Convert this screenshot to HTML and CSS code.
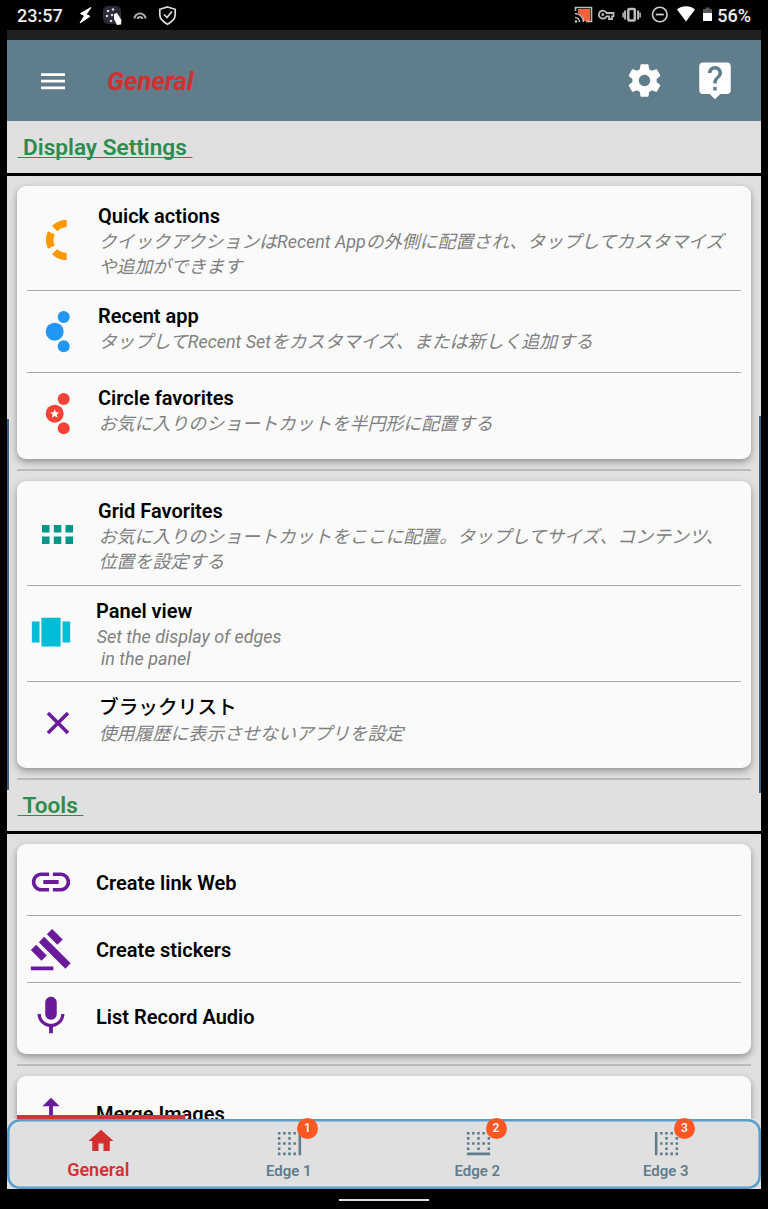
FILE: index.html
```html
<!DOCTYPE html>
<html lang="ja">
<head>
    <meta charset="UTF-8">
    <meta name="viewport" content="width=device-width, initial-scale=1.0">
    <title>General</title>
    <link rel="stylesheet" href="styles.css">
</head>
<body>
    <div class="status-bar">
        <span class="clock">23:57</span>
        <svg class="status-left" width="102" height="24" viewBox="0 0 102 24">
            <path d="M14 4.500L3.500 10.500l4 2.200L3 20 13 13.300l-4-1.800z" fill="#fff" stroke="#fff"/>
            <rect x="26" y="3" width="18" height="18" rx="5" fill="#2b2b38"/>
            <g fill="#d5d5df">
                <circle cx="31" cy="8" r="1.300"/><circle cx="36" cy="6.500" r="1.300"/><circle cx="30" cy="13" r="1.300"/>
                <circle cx="34" cy="18" r="1.300"/><circle cx="35" cy="12" r="1.300"/>
            </g>
            <path d="M37 11l3-1 4.500 7-.5 4.500-4 .5-3-6z" fill="#fff"/>
            <path d="M57.500 15.500a5.500 5 0 0 1 11 0M60.800 16a2.200 2 0 0 1 4.400 0" fill="none" stroke="#aaa" stroke-width="2.200"/>
            <path d="M90.500 4l7.700 2.300v5.500c0 4.500-3.200 7-7.700 9.500-4.500-2.500-7.700-5-7.700-9.500V6.300z" fill="none" stroke="#ddd" stroke-width="1.700"/>
            <path d="M87 11.500l3 3 5-6" fill="none" stroke="#ddd" stroke-width="1.700"/>
        </svg>
        <svg class="status-right" width="140" height="24" viewBox="0 0 140 24">
            <path d="M4 6h12v12h-6a12 12 0 0 0-6-8z" fill="#f0643c"/>
            <path d="M1.500 8V4.500h16v14H12M1 10.500a8.500 8.500 0 0 1 8.500 8.500M1 14.500A4.500 4.500 0 0 1 5.500 19" fill="none" stroke="#bbb" stroke-width="1.600"/>
            <circle cx="2" cy="18.500" r="1.200" fill="#ccc"/>
            <path d="M32.500 10h7v3.300H38V16h-3v-2.700h-2.500a4 4 0 1 1 0-3.300z" fill="none" stroke="#bbb" stroke-width="1.800"/>
            <circle cx="28.800" cy="11.700" r="1.400" fill="#bbb"/>
            <rect x="54.300" y="6" width="6.500" height="11.500" rx="1" fill="none" stroke="#bbb" stroke-width="2.500"/>
            <path d="M51.100 7.500v9M64.100 7.500v9" stroke="#bbb" stroke-width="2"/>
            <path d="M49.100 9.500v5M66.100 9.500v5" stroke="#bbb" stroke-width="1.500"/>
            <circle cx="85.800" cy="11.500" r="7.300" fill="none" stroke="#ccc" stroke-width="1.600"/>
            <path d="M81.800 11.500h8" stroke="#ccc" stroke-width="1.800"/>
            <path d="M103 6.500a14 14 0 0 1 18 0l-9 12z" fill="#fff"/>
            <path d="M129 6h2.500V4.500h4V6h2.500v5.500h-9z" fill="#555"/>
            <path d="M129 10h9v8h-9z" fill="#fff"/>
        </svg>
        <span class="battery">56%</span>
    </div>

    <div class="screen">
        <div class="toolbar">
            <svg class="menu-icon" width="24" height="17" viewBox="0 0 24 17">
                <path d="M0 1.600h24M0 8.200h24M0 14.800h24" stroke="#fff" stroke-width="2.700"/>
            </svg>
            <h1>General</h1>
            <svg class="gear-icon" width="39" height="39" viewBox="0 0 24 24">
                <path fill="#fff" d="M19.430 12.980c.04-.32.07-.64.07-.98s-.03-.66-.07-.98l2.110-1.650c.19-.15.24-.42.12-.64l-2-3.460c-.12-.22-.39-.3-.61-.22l-2.490 1c-.52-.4-1.080-.73-1.690-.98l-.38-2.650C14.460 2.180 14.250 2 14 2h-4c-.25 0-.46.18-.49.42l-.38 2.650c-.61.25-1.170.59-1.690.98l-2.490-1c-.23-.09-.49 0-.61.22l-2 3.460c-.13.22-.07.49.12.64l2.110 1.650c-.04.32-.07.65-.07.98s.03.66.07.98l-2.110 1.650c-.19.15-.24.42-.12.64l2 3.460c.12.22.39.3.61.22l2.490-1c.52.4 1.080.73 1.690.98l.38 2.650c.03.24.24.42.49.42h4c.25 0 .46-.18.49-.42l.38-2.650c.61-.25 1.170-.59 1.690-.98l2.490 1c.23.09.49 0 .61-.22l2-3.460c.12-.22.07-.49-.12-.64l-2.110-1.650zM12 15.500c-1.930 0-3.500-1.570-3.500-3.500s1.570-3.500 3.500-3.500 3.500 1.570 3.500 3.500-1.570 3.500-3.500 3.500z"/>
            </svg>
            <svg class="help-icon" width="42" height="42" viewBox="0 0 24 24">
                <path fill="#fff" d="M19 2H5c-1.110 0-2 .9-2 2v14c0 1.100.89 2 2 2h4l3 3 3-3h4c1.100 0 2-.9 2-2V4c0-1.100-.9-2-2-2zm-6 16h-2v-2h2v2zm2.070-7.750l-.9.920C13.450 11.900 13 12.500 13 14h-2v-.5c0-1.100.45-2.100 1.170-2.830l1.240-1.260c.37-.36.59-.86.59-1.410 0-1.100-.9-2-2-2s-2 .9-2 2H8c0-2.210 1.790-4 4-4s4 1.790 4 4c0 .88-.36 1.680-.93 2.250z"/>
            </svg>
        </div>

        <div class="content">
            <h2 class="section-title"> Display Settings </h2>

            <div class="card">
                <div class="row row-quick">
                    <svg class="icon" width="40" height="40" viewBox="0 0 40 40">
                        <path d="M29.700 3.600A16.600 16.600 0 0 0 17.700 8.600M14.400 12.800a16.600 16.600 0 0 0 0 14.400M17.700 31.600a16.600 16.600 0 0 0 12 4.900" fill="none" stroke="#ff9800" stroke-width="7.500"/>
                    </svg>
                    <div class="text">
                        <h3>Quick actions</h3>
                        <p>クイックアクションはRecent Appの外側に配置され、タップしてカスタマイズ<br>や追加ができます</p>
                    </div>
                </div>
                <div class="row row-recent">
                    <svg class="icon" width="40" height="42" viewBox="0 0 40 42">
                        <g fill="#2196f3">
                            <circle cx="26.700" cy="6" r="6"/><circle cx="17.700" cy="20.700" r="9"/><circle cx="26.700" cy="35.300" r="6"/>
                        </g>
                    </svg>
                    <div class="text">
                        <h3>Recent app</h3>
                        <p>タップしてRecent Setをカスタマイズ、または新しく追加する</p>
                    </div>
                </div>
                <div class="row row-circle">
                    <svg class="icon" width="40" height="42" viewBox="0 0 40 42">
                        <g fill="#f44336">
                            <circle cx="26.700" cy="6" r="6"/><circle cx="17.700" cy="20.700" r="9"/><circle cx="26.700" cy="35.300" r="6"/>
                        </g>
                        <path fill="#fff" d="M17.700 16l1.200 3.200 3.400.2-2.600 2.100.9 3.300-2.900-1.900-2.900 1.900.9-3.300-2.600-2.100 3.400-.2z"/>
                    </svg>
                    <div class="text">
                        <h3>Circle favorites</h3>
                        <p>お気に入りのショートカットを半円形に配置する</p>
                    </div>
                </div>
            </div>

            <div class="card">
                <div class="row row-grid">
                    <svg class="icon" width="31" height="19" viewBox="0 0 31 19">
                        <path fill="#009688" d="M0 0h7.500v7.500H0zM11.800 0h7.500v7.500h-7.500zM23.500 0H31v7.500h-7.500zM0 11.500h7.500V19H0zM11.800 11.500h7.500V19h-7.500zM23.500 11.500H31V19h-7.500z"/>
                    </svg>
                    <div class="text">
                        <h3>Grid Favorites</h3>
                        <p>お気に入りのショートカットをここに配置。タップしてサイズ、コンテンツ、<br>位置を設定する</p>
                    </div>
                </div>
                <div class="row wide row-panel">
                    <svg class="icon" width="46" height="46" viewBox="0 0 24 24">
                        <path fill="#00bcd4" d="M7 19h10V4H7v15zm-5-2h4V6H2v11zM18 6v11h4V6h-4z"/>
                    </svg>
                    <div class="text">
                        <h3>Panel view</h3>
                        <p class="pre">Set the display of edges
 in the panel</p>
                    </div>
                </div>
                <div class="row row-black">
                    <svg class="icon" width="24" height="24" viewBox="0 0 24 24">
                        <path d="M2 2l20 20M22 2L2 22" stroke="#6a1b9a" stroke-width="3.600"/>
                    </svg>
                    <div class="text">
                        <h3 class="jp">ブラックリスト</h3>
                        <p>使用履歴に表示させないアプリを設定</p>
                    </div>
                </div>
            </div>

            <h2 class="section-title tools"> Tools </h2>

            <div class="card">
                <div class="row wide row-link">
                    <svg class="icon" width="46" height="46" viewBox="0 0 24 24">
                        <path fill="#6a1b9a" d="M3.900 12c0-1.710 1.390-3.100 3.100-3.100h4V7H7c-2.760 0-5 2.240-5 5s2.240 5 5 5h4v-1.900H7c-1.710 0-3.100-1.390-3.100-3.100zM8 13h8v-2H8v2zm9-6h-4v1.900h4c1.710 0 3.100 1.390 3.100 3.100s-1.390 3.100-3.100 3.100h-4V17h4c2.760 0 5-2.240 5-5s-2.240-5-5-5z"/>
                    </svg>
                    <div class="text"><h3>Create link Web</h3></div>
                </div>
                <div class="row wide row-stickers">
                    <svg class="icon" width="45" height="45" viewBox="0 0 24 24">
                        <path fill="#6a1b9a" d="M1 21h12v2H1zM5.245 8.070l2.830-2.827 14.140 14.142-2.828 2.828zM12.317 1l5.657 5.656-2.830 2.830-5.654-5.660zM3.825 9.485l5.657 5.657-2.828 2.828-5.657-5.657z"/>
                    </svg>
                    <div class="text"><h3>Create stickers</h3></div>
                </div>
                <div class="row wide row-audio">
                    <svg class="icon" width="46" height="46" viewBox="0 0 24 24">
                        <path fill="#6a1b9a" d="M12 14c1.660 0 2.990-1.340 2.990-3L15 5c0-1.660-1.340-3-3-3S9 3.340 9 5v6c0 1.660 1.340 3 3 3zm5.300-3c0 3-2.540 5.100-5.300 5.100S6.700 14 6.700 11H5c0 3.410 2.720 6.230 6 6.720V21h2v-3.280c3.280-.48 6-3.300 6-6.720h-1.700z"/>
                    </svg>
                    <div class="text"><h3>List Record Audio</h3></div>
                </div>
            </div>

            <div class="card last">
                <div class="row wide row-merge">
                    <svg class="icon" width="46" height="46" viewBox="0 0 24 24">
                        <path fill="#6a1b9a" d="M17 20.410L18.410 19 15 15.590 13.590 17 17 20.410zM7.500 8H11v5.590L5.590 19 7 20.410l6-6V8h3.500L12 3.500 7.500 8z"/>
                    </svg>
                    <div class="text"><h3>Merge Images</h3></div>
                </div>
            </div>

            <div class="tab-indicator"></div>
        </div>

        <div class="tabs">
            <div class="tab active">
                <svg width="30" height="30" viewBox="0 0 24 24"><path fill="#d32f2f" d="M10 20v-6h4v6h5v-8h3L12 3 2 12h3v8z"/></svg>
                <span>General</span>
            </div>
            <div class="tab">
                <svg width="31" height="31" viewBox="0 0 24 24">
                    <path id="edge" fill="#607d8b" d="M7 21h2v-2H7v2zM3 5h2V3H3v2zm4 0h2V3H7v2zm0 8h2v-2H7v2zm-4 8h2v-2H3v2zm8 0h2v-2h-2v2zm-8-8h2v-2H3v2zm0 4h2v-2H3v2zm0-8h2V7H3v2zm8 8h2v-2h-2v2zm4-4h2v-2h-2v2zm4-10v18h2V3h-2zm-4 18h2v-2h-2v2zm0-16h2V3h-2v2zm-4 8h2v-2h-2v2zm0-8h2V3h-2v2zm0 4h2V7h-2v2z"/>
                </svg>
                <span>Edge 1</span>
                <b class="badge">1</b>
            </div>
            <div class="tab">
                <svg width="31" height="31" viewBox="0 0 24 24"><use href="#edge" transform="rotate(90 12 12)"/></svg>
                <span>Edge 2</span>
                <b class="badge">2</b>
            </div>
            <div class="tab">
                <svg width="31" height="31" viewBox="0 0 24 24"><use href="#edge" transform="rotate(180 12 12)"/></svg>
                <span>Edge 3</span>
                <b class="badge">3</b>
            </div>
        </div>

        <div class="edge-handle left"></div>
        <div class="edge-handle right"></div>
    </div>

    <div class="gesture-bar"></div>
</body>
</html>
```
FILE: styles.css
```css
* {
    box-sizing: border-box;
}

body {
    margin: 0;
    height: 1209px;
    overflow: hidden;
    background-color: #000;
    font-family: Roboto, "Noto Sans CJK JP", sans-serif;
}

h1, h2, h3, p {
    margin: 0;
}

svg {
    display: block;
    flex: none;
}

.status-bar {
    display: flex;
    align-items: center;
    height: 30px;
    padding: 0 17px;
    color: #eee;
    font-size: 18px;
    font-weight: 500;
}

.status-left {
    margin-left: 14px;
}

.status-right {
    margin-left: auto;
    margin-right: 3px;
}

.screen {
    position: relative;
    height: 1159px;
    margin: 0 7px;
    border-top: 10px solid #212121;
    background-color: #e0e0e0;
}

.toolbar {
    display: flex;
    align-items: center;
    height: 81px;
    padding: 0 25px 0 34px;
    background-color: #607d8b;
}

.menu-icon {
    margin-top: 2px;
}

.toolbar h1 {
    margin-top: 1px;
    margin-left: 42px;
    color: #d32f2f;
    font-size: 25.700px;
    font-weight: 700;
    font-style: italic;
}

.gear-icon {
    margin-top: -1px;
    margin-left: auto;
}

.help-icon {
    margin-top: -2px;
    margin-left: 30px;
}

.content {
    position: relative;
    height: 998px;
    overflow: hidden;
}

.section-title {
    height: 55px;
    padding: 12px 0 0 10.500px;
    border-bottom: 3px solid #000;
    color: #2e8b50;
    font-size: 22.600px;
    font-weight: 600;
    line-height: 30px;
    white-space: pre;
    text-decoration: underline;
    text-decoration-thickness: 1px;
    text-underline-offset: 2px;
    text-decoration-skip-ink: none;
}

.card {
    position: relative;
    margin: 10px 10px 22px;
    padding: 0 10px;
    border-radius: 9px;
    background-color: #fafafa;
    box-shadow: 0 3px 7px rgba(0, 0, 0, 0.35);
}

/* separator under each card */
.card::after {
    content: "";
    position: absolute;
    left: 0;
    right: 0;
    bottom: -12px;
    height: 2px;
    background-color: #bababa;
}

.row {
    display: flex;
    align-items: flex-start;
    border-bottom: 1px solid #a8a8a8;
}

.row:last-child {
    border-bottom: none;
}

.icon {
    margin: 0 16px 0 10px;
}

.text {
    margin-left: 5px;
}

.wide .icon {
    margin: 0 18px 0 1px;
}

.wide .text {
    margin-left: 4px;
}

.text h3 {
    color: #000;
    font-size: 20px;
    font-weight: 600;
    line-height: 26px;
}

.text .jp {
    padding-left: 1px;
    font-size: 19.700px;
    font-weight: 500;
    line-height: 27px;
}

.text p {
    padding-left: 0.700px;
    color: #808080;
    font-size: 17.930px;
    font-style: italic;
    line-height: 25px;
    white-space: nowrap;
}

.text .pre {
    padding-top: 2px;
    line-height: 22px;
    white-space: pre;
}

.row-quick { height: 105px; padding-top: 17px; }
.row-quick .icon { margin-top: 17px; }
.row-recent { height: 82px; padding-top: 12px; }
.row-recent .icon { margin-top: 8px; }
.row-circle { height: 86px; padding-top: 12px; }
.row-circle .icon { margin-top: 8px; }

.row-grid { height: 105px; padding-top: 17px; }
.row-grid .icon { margin: 27px 20px 0 15px; }
.row-panel { height: 96px; padding-top: 12px; }
.row-panel .icon { margin-top: 12px; }
.row-black { height: 86px; padding-top: 12px; }
.row-black .icon { margin: 17px 23.500px 0 18.500px; }

.tools {
    height: 56px;
    margin-top: -12px;
    padding-top: 13px;
}

.row-link { height: 72px; padding-top: 26px; }
.row-link .icon { margin-top: -11px; }
.row-stickers { height: 67px; padding-top: 21px; }
.row-stickers .icon { margin: -10px 18px 0 2px; }
.row-audio { height: 71px; padding-top: 21px; }
.row-audio .icon { margin-top: -11px; }

.last {
    margin-bottom: 0;
}

.row-merge { height: 60px; padding-top: 25px; }
.row-merge .icon { margin-top: -10px; }

.tab-indicator {
    position: absolute;
    left: 10px;
    bottom: 0;
    width: 168px;
    height: 4px;
    background-color: #cb3838;
}

.tabs {
    display: flex;
    height: 70px;
    border-radius: 13px;
    background-color: #e0e0e0;
    box-shadow: inset 0 0 0 2.500px #5a9fcb;
}

.tab {
    position: relative;
    display: flex;
    flex: 1;
    flex-direction: column;
    align-items: center;
    padding-top: 9px;
    color: #607d8b;
    font-size: 15px;
    font-weight: 600;
    line-height: 20px;
}

.tab span {
    margin-top: 2px;
    margin-right: 2px;
}

.tab.active {
    padding-top: 7px;
    color: #d03238;
    font-size: 18px;
}

.tab.active span {
    margin-top: 4px;
    margin-right: 6px;
}

.badge {
    position: absolute;
    top: -1px;
    left: 101.500px;
    width: 21px;
    height: 21px;
    border-radius: 50%;
    background-color: #ff5722;
    color: #fff;
    font-size: 12px;
    font-weight: 500;
    line-height: 21px;
    text-align: center;
}

/* swipe areas at the screen edges */
.edge-handle {
    position: absolute;
    width: 2px;
    height: 375px;
    background-color: #3b6484;
}

.edge-handle.left {
    top: 371px;
    height: 371px;
    left: 0;
    top: 379px;
}

.edge-handle.right {
    top: 376px;
    height: 377px;
    right: 0;
}

.gesture-bar {
    width: 90px;
    height: 2px;
    margin: 10px auto 0;
    background-color: #ddd;
}
```
